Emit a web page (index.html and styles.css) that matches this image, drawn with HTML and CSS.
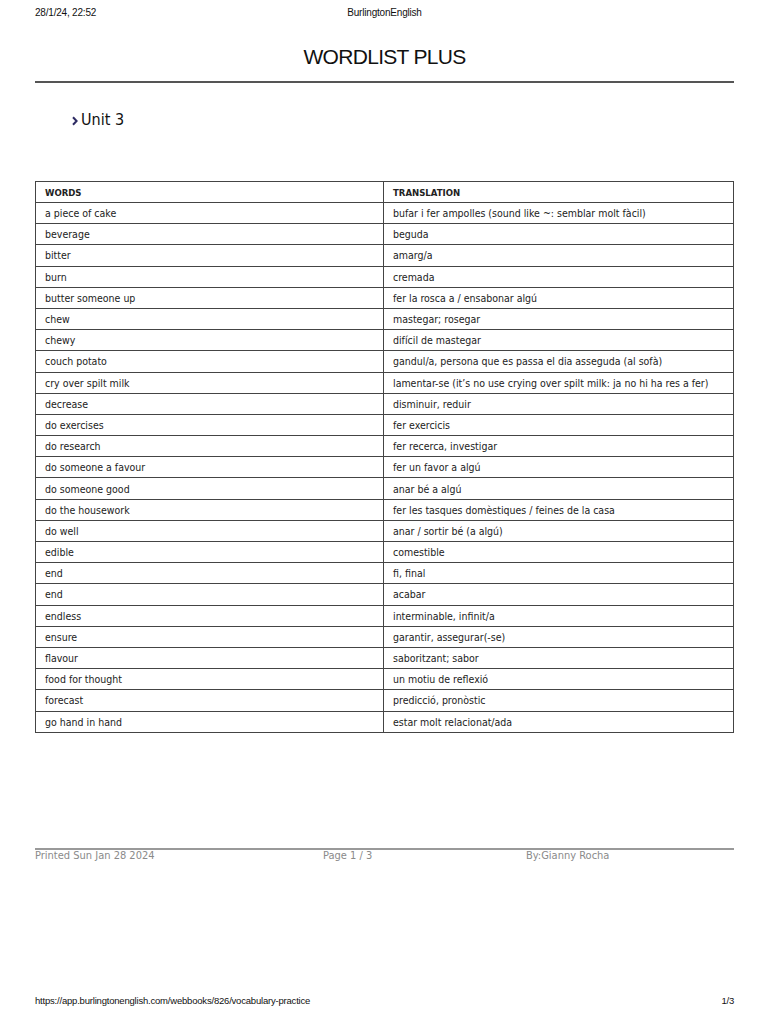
FILE: index.html
```html
<!DOCTYPE html>
<html lang="en">
<head>
<meta charset="utf-8">
<title>BurlingtonEnglish</title>
<link rel="stylesheet" href="styles.css">
</head>
<body>
<div class="page">
  <header class="print-head">
    <span class="date">28/1/24, 22:52</span>
    <span class="site">BurlingtonEnglish</span>
    <span class="spacer"></span>
  </header>
  <h1 class="title">WORDLIST PLUS</h1>
  <div class="rule"></div>
  <h2 class="unit"><svg class="chev" width="6" height="10" viewBox="0 0 6 10"><path d="M1 1.2 L4.6 5 L1 8.8" fill="none" stroke="#2d2b63" stroke-width="2"/></svg>Unit 3</h2>
  <table class="words">
    <thead>
      <tr><th>WORDS</th><th>TRANSLATION</th></tr>
    </thead>
    <tbody>
      <tr><td>a piece of cake</td><td>bufar i fer ampolles (sound like ~: semblar molt fàcil)</td></tr>
      <tr><td>beverage</td><td>beguda</td></tr>
      <tr><td>bitter</td><td>amarg/a</td></tr>
      <tr><td>burn</td><td>cremada</td></tr>
      <tr><td>butter someone up</td><td>fer la rosca a / ensabonar algú</td></tr>
      <tr><td>chew</td><td>mastegar; rosegar</td></tr>
      <tr><td>chewy</td><td>difícil de mastegar</td></tr>
      <tr><td>couch potato</td><td>gandul/a, persona que es passa el dia asseguda (al sofà)</td></tr>
      <tr><td>cry over spilt milk</td><td>lamentar-se (it’s no use crying over spilt milk: ja no hi ha res a fer)</td></tr>
      <tr><td>decrease</td><td>disminuir, reduir</td></tr>
      <tr><td>do exercises</td><td>fer exercicis</td></tr>
      <tr><td>do research</td><td>fer recerca, investigar</td></tr>
      <tr><td>do someone a favour</td><td>fer un favor a algú</td></tr>
      <tr><td>do someone good</td><td>anar bé a algú</td></tr>
      <tr><td>do the housework</td><td>fer les tasques domèstiques / feines de la casa</td></tr>
      <tr><td>do well</td><td>anar / sortir bé (a algú)</td></tr>
      <tr><td>edible</td><td>comestible</td></tr>
      <tr><td>end</td><td>fi, final</td></tr>
      <tr><td>end</td><td>acabar</td></tr>
      <tr><td>endless</td><td>interminable, infinit/a</td></tr>
      <tr><td>ensure</td><td>garantir, assegurar(-se)</td></tr>
      <tr><td>flavour</td><td>saboritzant; sabor</td></tr>
      <tr><td>food for thought</td><td>un motiu de reflexió</td></tr>
      <tr><td>forecast</td><td>predicció, pronòstic</td></tr>
      <tr><td>go hand in hand</td><td>estar molt relacionat/ada</td></tr>
    </tbody>
  </table>
  <footer class="page-foot">
    <span>Printed Sun Jan 28 2024</span>
    <span>Page 1 / 3</span>
    <span>By:Gianny Rocha</span>
  </footer>
  <div class="print-foot">
    <span>https://app.burlingtonenglish.com/webbooks/826/vocabulary-practice</span>
    <span>1/3</span>
  </div>
</div>
</body>
</html>
```

FILE: styles.css
```css
html, body {
  margin: 0;
  padding: 0;
  background: #fff;
}
.page {
  width: 768px;
  height: 1024px;
  box-sizing: border-box;
  padding: 0 34px 0 35px;
  display: flex;
  flex-direction: column;
  font-family: "Liberation Sans", Arial, sans-serif;
  color: #000;
}
.print-head {
  display: grid;
  grid-template-columns: 1fr auto 1fr;
  align-items: center;
  height: 12px;
  margin-top: 6px;
  font-size: 10px;
  letter-spacing: -0.2px;
  color: #111;
}
.print-head .site { text-align: center; }
.title {
  margin: 26px 0 0;
  text-align: center;
  font-size: 21px;
  font-weight: normal;
  line-height: 26px;
  color: #111;
  letter-spacing: -0.7px;
}
.rule {
  margin-top: 11px;
  height: 0;
  border-top: 2px solid #555;
}
.unit {
  margin: 27px 0 0 37px;
  display: flex;
  align-items: center;
  gap: 3px;
  font-family: "DejaVu Sans Condensed", "DejaVu Sans", sans-serif;
  font-weight: normal;
  font-size: 16px;
  line-height: 20px;
  color: #111;
}
.chev { display: block; margin-top: 1px; }
.words {
  margin-top: 51px;
  width: 100%;
  border-collapse: collapse;
  font-family: "DejaVu Sans Condensed", "DejaVu Sans", sans-serif;
  font-size: 10.5px;
  color: #222;
  border: 1px solid #333;
}
.words th, .words td {
  border: 1px solid #444;
  padding: 0 0 0 9px;
  box-sizing: border-box;
  text-align: left;
  vertical-align: middle;
}
.words th {
  height: 21px;
  font-weight: bold;
  font-size: 9.5px;
}
.words td { height: 21.2px; }
.words th:first-child, .words td:first-child { width: 348px; }
.page-foot {
  margin-top: 115px;
  border-top: 2px solid #999;
  display: grid;
  grid-template-columns: 288px 203px 1fr;
  padding-top: 0;
  font-family: "DejaVu Sans Condensed", "DejaVu Sans", sans-serif;
  font-size: 11px;
  line-height: 11px;
  color: #8a8a8a;
}
.print-foot {
  margin-top: auto;
  margin-bottom: 18px;
  display: flex;
  justify-content: space-between;
  font-size: 9.5px;
  letter-spacing: -0.2px;
  color: #111;
}
```
